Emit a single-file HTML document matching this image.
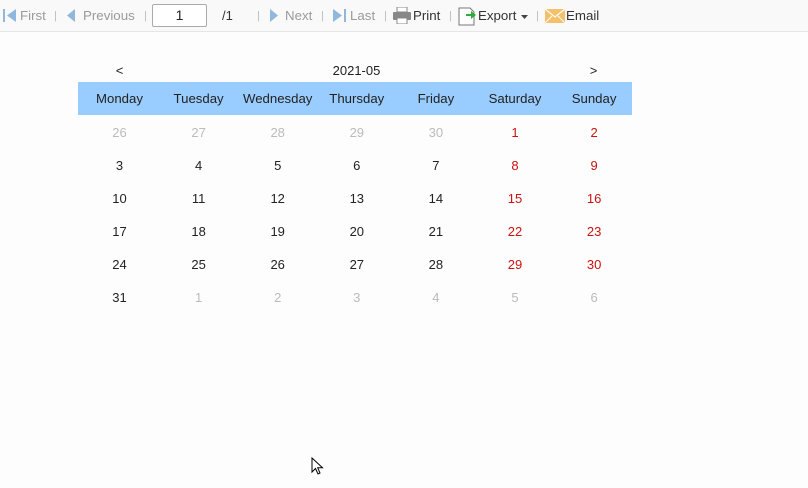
<!DOCTYPE html>
<html><head><style>
body{margin:0;width:808px;height:488px;background:#fdfdfd;font-family:"Liberation Sans",sans-serif;position:relative;overflow:hidden}
.tb{position:absolute;left:0;top:0;width:808px;height:31px;background:#f9f9f9;border-bottom:1px solid #e6e6e6;font-size:13.3px}
.tb span{position:absolute;top:8px;line-height:16px}
.g{color:#9a9a9a}.d{color:#333}.sep{color:#bbb;font-size:11px}
.inp{position:absolute;left:152px;top:4px;width:53px;height:21px;border:1px solid #aaa;background:#fff;text-align:center;font-size:14px;line-height:21px;color:#222;border-radius:2px}
.c{position:absolute;width:79px;text-align:center;font-size:13px;line-height:16px}
.hd{position:absolute;left:78px;top:82px;width:554px;height:33px;background:#99ccff}
.b{color:#222}.gr{color:#bbb}.r{color:#cc1111}
</style></head><body>
<div class="tb">
<svg style="position:absolute;left:3px;top:9px" width="14" height="13"><rect x="0" y="0" width="2" height="13" fill="#8fb8dc"/><path d="M13 0 L4 6.5 L13 13Z" fill="#8fb8dc"/></svg>
<span class="g" style="left:20px">First</span><span class="sep" style="left:54px">|</span>
<svg style="position:absolute;left:66px;top:9px" width="10" height="13"><path d="M9 0 L1 6.5 L9 13Z" fill="#8fb8dc"/></svg>
<span class="g" style="left:83px">Previous</span><span class="sep" style="left:144px">|</span>
<div class="inp">1</div>
<span class="d" style="left:222px;font-size:13px">/1</span>
<span class="sep" style="left:257px">|</span>
<svg style="position:absolute;left:269px;top:9px" width="10" height="13"><path d="M1 0 L9 6.5 L1 13Z" fill="#8fb8dc"/></svg>
<span class="g" style="left:285px">Next</span><span class="sep" style="left:321px">|</span>
<svg style="position:absolute;left:333px;top:9px" width="14" height="13"><path d="M0 0 L9 6.5 L0 13Z" fill="#8fb8dc"/><rect x="11" y="0" width="2" height="13" fill="#8fb8dc"/></svg>
<span class="g" style="left:350px">Last</span><span class="sep" style="left:384px">|</span>
<svg style="position:absolute;left:393px;top:7px" width="18" height="17"><rect x="4" y="0" width="10" height="5" fill="#fff" stroke="#888"/><rect x="0" y="5" width="18" height="8" rx="1" fill="#888"/><rect x="4" y="11" width="10" height="6" fill="#fff" stroke="#888"/></svg>
<span class="d" style="left:413px">Print</span><span class="sep" style="left:449px">|</span>
<svg style="position:absolute;left:458px;top:6px" width="18" height="20"><path d="M1 2 H12 L16 6 V19 H1Z" fill="#fff" stroke="#777"/><path d="M8 8 H13 V5 L18 9 L13 13 V10 H8Z" fill="#2eaa3c"/></svg>
<span class="d" style="left:478px">Export</span>
<svg style="position:absolute;left:521px;top:15px" width="7" height="4"><path d="M0 0 H7 L3.5 4Z" fill="#444"/></svg>
<span class="sep" style="left:536px">|</span>
<svg style="position:absolute;left:545px;top:9px" width="20" height="14"><rect width="20" height="14" fill="#f5c06a"/><path d="M0 0 L10 8 L20 0" fill="none" stroke="#fff" stroke-width="1.2"/><path d="M0 14 L7 7 M20 14 L13 7" stroke="#fff" stroke-width="1"/></svg>
<span class="d" style="left:566px">Email</span>
</div>
<div class="c b" style="left:80px;top:63px">&lt;</div>
<div class="c b" style="left:317px;top:63px">2021-05</div>
<div class="c b" style="left:554px;top:63px">&gt;</div>
<div class="hd"></div>
<div id="g"></div>
<script>
var h=['Monday','Tuesday','Wednesday','Thursday','Friday','Saturday','Sunday'];
var s='';
for(var i=0;i<7;i++)s+='<div class="c" style="left:'+(80+i*79.1)+'px;top:91px;color:#222;font-size:13.2px">'+h[i]+'</div>';
var all=[];
for(var d=26;d<=30;d++)all.push([d,1]);
for(var d=1;d<=31;d++)all.push([d,0]);
for(var d=1;d<=6;d++)all.push([d,1]);
for(var k=0;k<all.length;k++){var r=Math.floor(k/7),c=k%7;var cl=all[k][1]?'gr':(c>=5?'r':'b');
s+='<div class="c '+cl+'" style="left:'+(80+c*79.1)+'px;top:'+(125+r*33)+'px">'+all[k][0]+'</div>';}
document.getElementById('g').innerHTML=s;
</script>
<svg style="position:absolute;left:311px;top:457px" width="13" height="19"><path d="M1 1 V15 L4.5 11.5 L7 17 L9 16 L6.7 10.8 L11.5 10.8Z" fill="#fff" stroke="#000" stroke-width="1"/></svg>
</body></html>
